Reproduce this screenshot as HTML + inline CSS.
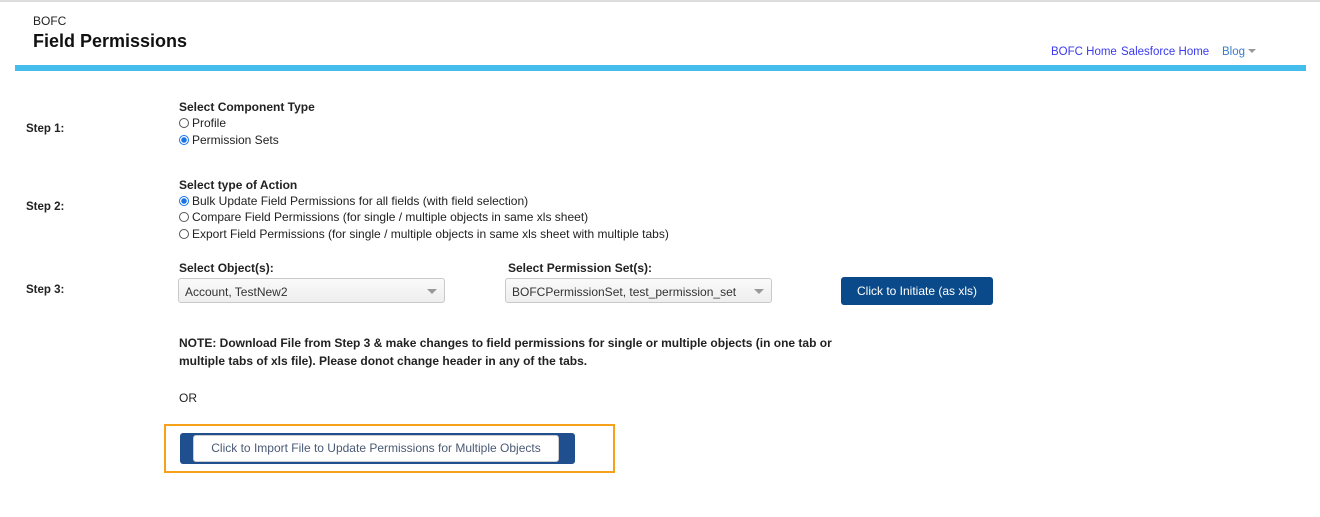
<!DOCTYPE html>
<html><head><meta charset="utf-8"><style>
body{margin:0;width:1320px;height:517px;background:#fff;font-family:"Liberation Sans",sans-serif;color:#16325c;position:relative;overflow:hidden;font-size:12px}
.a{position:absolute;white-space:nowrap}
.b{font-weight:bold;color:#222;font-size:11.5px}
.r{display:inline-block;width:10px;height:10px;border:1px solid #555;border-radius:50%;vertical-align:-1px;margin-right:3px;box-sizing:border-box;background:#fff}
.r.on{border-color:#1a73e8;background:radial-gradient(circle,#1a73e8 0 2.5px,#fff 3px)}
.sel{position:absolute;height:25px;border:1px solid #c9c9c9;border-radius:3px;background:linear-gradient(#fafafa,#eee);box-sizing:border-box;padding:6px 6px;color:#333;font-size:12px}
.sel:after{content:"";position:absolute;right:7px;top:10px;border:5px solid transparent;border-top:5px solid #999;border-bottom:0}
.t{color:#222}
</style></head><body>
<div class="a" style="left:0;top:0;width:1320px;height:2px;background:#ddd"></div>
<div class="a t" style="left:33px;top:14px;font-size:12px">BOFC</div>
<div class="a" style="left:33px;top:31px;font-size:18px;font-weight:bold;color:#111">Field Permissions</div>
<div class="a" style="left:1051px;top:46px;color:#3a3aee;font-size:11.5px">BOFC Home</div>
<div class="a" style="left:1121px;top:46px;color:#3a3aee;font-size:11.5px">Salesforce Home</div>
<div class="a" style="left:1222px;top:46px;color:#3b7cc4;font-size:11.5px">Blog <span style="display:inline-block;border:4px solid transparent;border-top:4px solid #999;vertical-align:-2px"></span></div>
<div class="a" style="left:15px;top:65px;width:1291px;height:6px;background:#45bdec"></div>

<div class="a b" style="left:26px;top:123px">Step 1:</div>
<div class="a b" style="left:179px;top:100px;font-size:12px">Select Component Type</div>
<div class="a t" style="left:179px;top:116px"><span class="r"></span>Profile</div>
<div class="a t" style="left:179px;top:133px"><span class="r on"></span>Permission Sets</div>

<div class="a b" style="left:26px;top:201px">Step 2:</div>
<div class="a b" style="left:179px;top:178px;font-size:12px">Select type of Action</div>
<div class="a t" style="left:179px;top:194px"><span class="r on"></span>Bulk Update Field Permissions for all fields (with field selection)</div>
<div class="a t" style="left:179px;top:210px"><span class="r"></span>Compare Field Permissions (for single / multiple objects in same xls sheet)</div>
<div class="a t" style="left:179px;top:227px"><span class="r"></span>Export Field Permissions (for single / multiple objects in same xls sheet with multiple tabs)</div>

<div class="a b" style="left:26px;top:284px">Step 3:</div>
<div class="a b" style="left:179px;top:261px;font-size:12px">Select Object(s):</div>
<div class="sel" style="left:178px;top:278px;width:267px">Account, TestNew2</div>
<div class="a b" style="left:508px;top:261px;font-size:12px">Select Permission Set(s):</div>
<div class="sel" style="left:505px;top:278px;width:267px">BOFCPermissionSet, test_permission_set</div>
<div class="a" style="left:841px;top:277px;width:152px;height:28px;background:#0b4a8a;border-radius:3px;color:#fff;text-align:center;line-height:28px;font-size:12px">Click to Initiate (as xls)</div>

<div class="a b" style="left:179px;top:334px;line-height:18px;font-size:12px">NOTE: Download File from Step 3 &amp; make changes to field permissions for single or multiple objects (in one tab or<br>multiple tabs of xls file). Please donot change header in any of the tabs.</div>
<div class="a t" style="left:179px;top:391px">OR</div>

<div class="a" style="left:164px;top:424px;width:451px;height:49px;border:2px solid #f7a11a;box-sizing:border-box"></div>
<div class="a" style="left:180px;top:433px;width:395px;height:31px;background:#1f4f8f;border-radius:3px"></div>
<div class="a" style="left:193px;top:435px;width:366px;height:27px;background:#fff;border:1px solid #ccc;border-radius:3px;box-sizing:border-box;text-align:center;line-height:25px;color:#4a5a75;font-size:12px">Click to Import File to Update Permissions for Multiple Objects</div>
</body></html>
